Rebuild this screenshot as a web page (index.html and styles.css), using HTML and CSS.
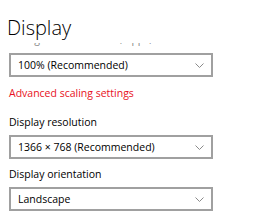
FILE: index.html
```html
<!DOCTYPE html>
<html lang="en">

<head>
    <meta charset="UTF-8">
    <title>Display</title>
    <link rel="stylesheet" href="styles.css">
</head>

<body>
    <div class="page">
        <!-- header -->
        <h1 class="title">Display</h1>

        <!-- line scrolled under the header -->
        <div class="clipped">
            <div class="clipped-text">Change the size of text, apps, and other items</div>
        </div>

        <div class="select select-scale">
            <span>100% (Recommended)</span>
            <svg class="chevron" width="9" height="5" viewBox="0 0 9 5">
                <path d="M0.5 0.5 L4.5 4.5 L8.5 0.5" fill="none" stroke="#8a8a8a" stroke-width="1"/>
            </svg>
        </div>

        <a href="#" class="link">Advanced scaling settings</a>

        <div class="label">Display resolution</div>
        <div class="select">
            <span>1366 × 768 (Recommended)</span>
            <svg class="chevron" width="9" height="5" viewBox="0 0 9 5">
                <path d="M0.5 0.5 L4.5 4.5 L8.5 0.5" fill="none" stroke="#8a8a8a" stroke-width="1"/>
            </svg>
        </div>

        <div class="label label-orient">Display orientation</div>
        <div class="select">
            <span>Landscape</span>
            <svg class="chevron" width="9" height="5" viewBox="0 0 9 5">
                <path d="M0.5 0.5 L4.5 4.5 L8.5 0.5" fill="none" stroke="#8a8a8a" stroke-width="1"/>
            </svg>
        </div>
    </div>
</body>

</html>
```

FILE: styles.css
```css
/* general */
body {
    margin: 0;
    padding: 0;
    background-color: #fff;
    color: #000;
    font-family: "Open Sans", "Noto Sans", sans-serif;
    font-size: 10.5px;
    line-height: 16px;
}

.page {
    padding: 15px 0 0 9px;
}

/* header */
.title {
    margin: 0 0 0 -2px;
    font-size: 20px;
    font-weight: 300;
    line-height: 26px;
}

.clipped {
    height: 4px;
    margin-top: 2px;
    overflow: hidden;
    color: #888;
}

.clipped-text {
    margin-top: -12px;
    white-space: nowrap;
}

/* dropdowns */
.select {
    box-sizing: border-box;
    width: 204px;
    height: 24px;
    border: 2px solid #a0a0a0;
    display: flex;
    align-items: center;
    justify-content: space-between;
    padding: 0 7px 0 7px;
}

.select-scale {
    margin-top: 6px;
}

.chevron {
    display: block;
}

.link {
    display: block;
    margin-top: 8px;
    color: #e81123;
    text-decoration: none;
}

.label {
    margin: 13px 0 5px 0;
}

.label-orient {
    margin-top: 7px;
}
```
